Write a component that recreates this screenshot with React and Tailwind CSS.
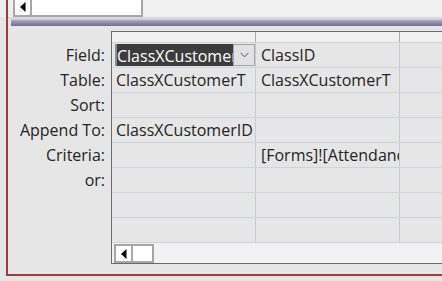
import React from "react";

const labels = ["Field:", "Table:", "Sort:", "Append To:", "Criteria:", "or:", "", ""];

const col1 = [null, "ClassXCustomerT", "", "ClassXCustomerID", "", "", "", ""];
const col2 = ["ClassID", "ClassXCustomerT", "", "", "[Forms]![Attendance]", "", "", ""];

function LeftArrow() {
  return (
    <svg width="6" height="10" viewBox="0 0 6 10">
      <polygon points="5.5,0 5.5,10 0,5" fill="#000" />
    </svg>
  );
}

function Chevron() {
  return (
    <svg width="9" height="6" viewBox="0 0 9 6">
      <polyline points="0.5,0.8 4.5,4.8 8.5,0.8" fill="none" stroke="#555" strokeWidth="1" />
    </svg>
  );
}

function FieldCell() {
  return (
    <div className="flex h-full pl-[3px] py-[1px]">
      <div className="w-[2px] bg-[#8c8c8c]" />
      <div className="w-[116px] bg-[#3c3c3c] text-white overflow-hidden whitespace-nowrap">ClassXCustomer</div>
      <div className="w-[22px] border border-[#a6a6a6] bg-[#e2e2e2] flex items-center justify-center">
        <Chevron />
      </div>
    </div>
  );
}

export default function App() {
  return (
    <div
      className="w-[442px] h-[281px] overflow-hidden bg-[linear-gradient(to_bottom,#f0f0f0_17px,#e6e6e6_17px)] text-[16px] text-[#242424]"
      style={{ fontFamily: '"Open Sans", "Noto Sans", sans-serif' }}
    >
      <div className="ml-[6px] h-[276px] border-l-2 border-b-2 border-[#a23b3b] flex flex-col">
        {/* top table-pane scrollbar */}
        <div className="h-[17px] bg-[#f0f0f0] pl-[5px] shrink-0">
          <div className="w-[130px] h-[17px] flex border-x-2 border-b-2 border-[#a6a6a6] bg-white">
            <div className="w-[17px] border-r-2 border-[#a6a6a6] flex items-center justify-center pb-[2px]">
              <LeftArrow />
            </div>
            <div className="flex-1" />
          </div>
        </div>
        {/* splitter */}
        <div className="h-[2px] bg-[#dadada] shrink-0" />
        <div className="h-[7px] ml-[3px] shrink-0 bg-[linear-gradient(to_bottom,#d6d5e2,#9e9cba_30%,#6f6d91)]" />
        {/* design grid */}
        <div className="flex pt-[5px]">
          <div className="w-[103px] shrink-0 pt-[12px] pr-[6px] text-right leading-[25px]">
            {labels.map((l, i) => (
              <div key={i} className="h-[25px] whitespace-nowrap">{l}</div>
            ))}
          </div>
          <div className="flex-1 border-l border-t border-b border-[#6a6a6a] overflow-hidden">
            <div className="h-[11px] flex bg-[#f0f0f0] border-b border-[#cfd4da]">
              <div className="w-[144px] shrink-0 border-r border-[#ababab]" />
              <div className="w-[144px] shrink-0 border-r border-[#ababab]" />
              <div className="flex-1" />
            </div>
            {labels.map((_, i) => (
              <div key={i} className="h-[25px] flex border-b border-[#cdd4de] leading-[24px]">
                <div className="w-[144px] shrink-0 border-r border-[#c6ccd4] overflow-hidden whitespace-nowrap">
                  {i === 0 ? <FieldCell /> : <span className="pl-[4px]">{col1[i]}</span>}
                </div>
                <div className="w-[144px] shrink-0 border-r border-[#c6ccd4] overflow-hidden whitespace-nowrap pl-[5px]">
                  {col2[i]}
                </div>
                <div className="flex-1" />
              </div>
            ))}
            <div className="h-[20px] bg-[#f2f2f2] pl-[2px] pt-[1px]">
              <div className="h-[19px] flex">
                <div className="w-[19px] border-2 border-[#a6a6a6] bg-white flex items-center justify-center">
                  <LeftArrow />
                </div>
                <div className="w-[21px] border-2 border-l-0 border-[#a6a6a6] bg-white" />
              </div>
            </div>
          </div>
        </div>
      </div>
    </div>
  );
}
